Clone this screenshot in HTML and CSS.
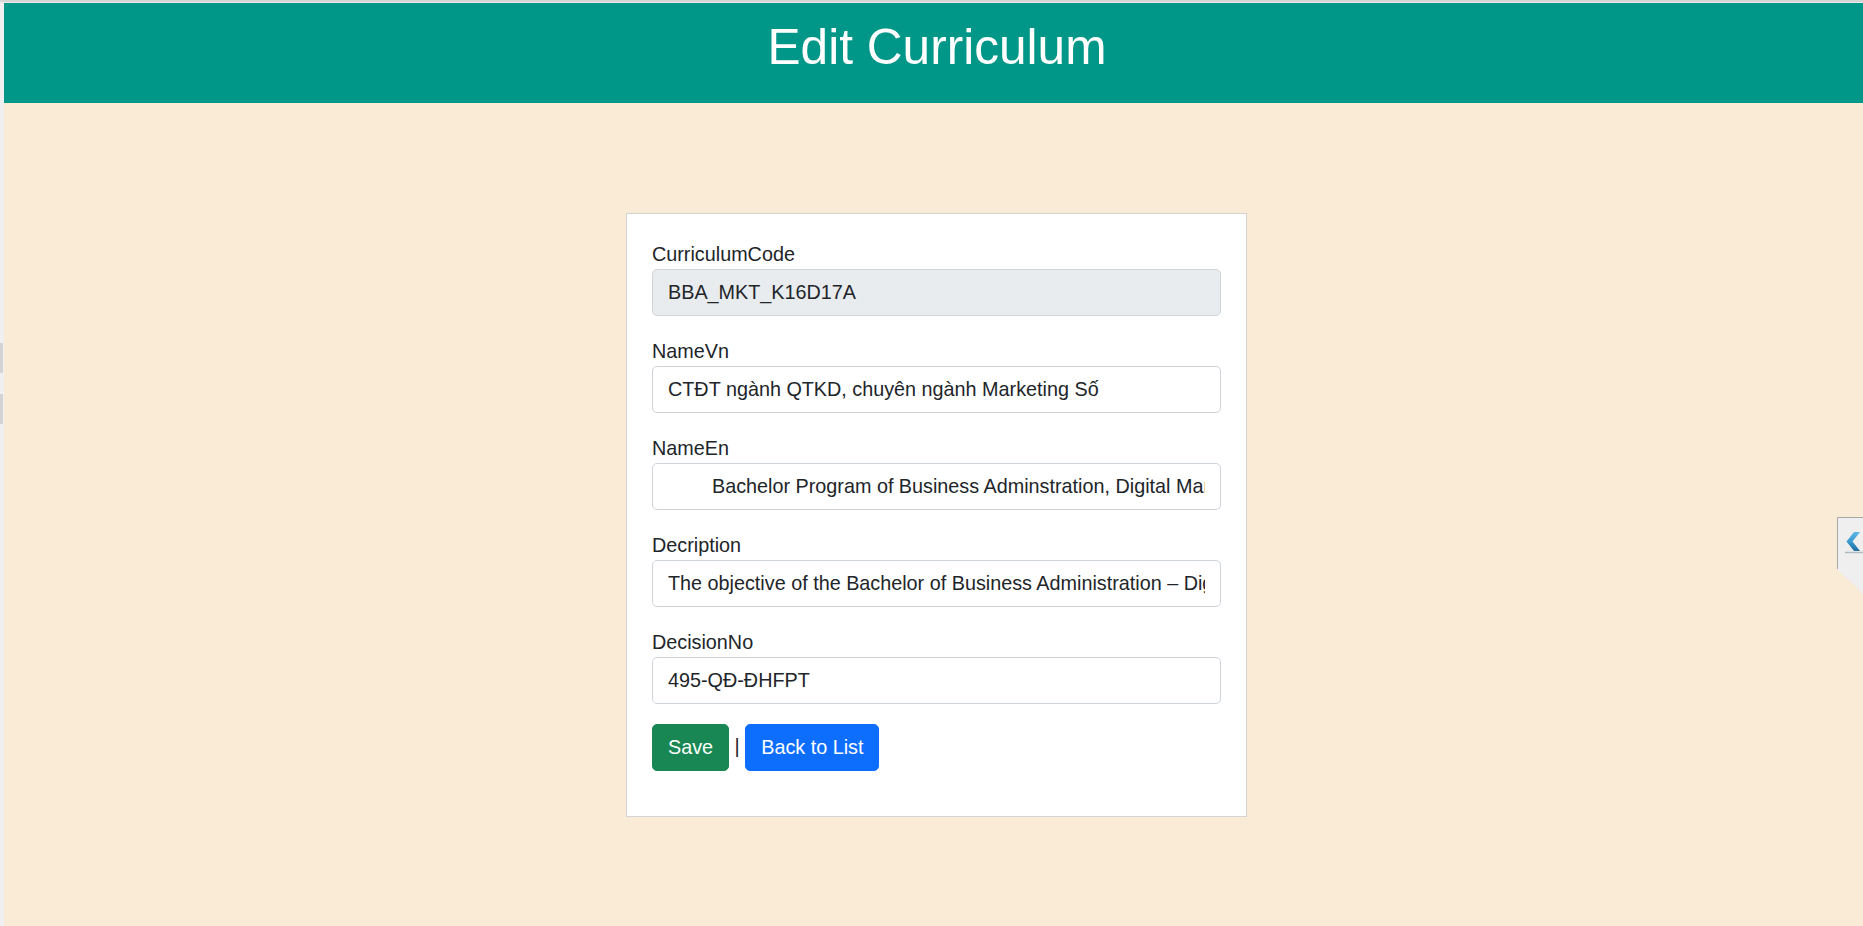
FILE: index.html
```html
<!DOCTYPE html>
<html lang="vi">
<head>
<meta charset="utf-8">
<title>Edit Curriculum</title>
<link rel="stylesheet" href="styles.css">
</head>
<body>
<div class="topline"></div>
<div class="frame">
  <div class="leftbar">
    <span class="tab tab-first"></span>
    <span class="tab tab-second"></span>
  </div>
  <div class="main">
    <header class="banner">
      <h1 class="banner-title">Edit Curriculum</h1>
    </header>
    <div class="content">
      <form class="card">
        <div class="form-group">
          <label class="form-label">CurriculumCode</label>
          <input class="form-control form-control-readonly" type="text" value="BBA_MKT_K16D17A" readonly>
        </div>
        <div class="form-group">
          <label class="form-label">NameVn</label>
          <input class="form-control" type="text" value="CTĐT ngành QTKD, chuyên ngành Marketing Số">
        </div>
        <div class="form-group">
          <label class="form-label">NameEn</label>
          <input class="form-control" type="text" value="        Bachelor Program of Business Adminstration, Digital Marketing">
        </div>
        <div class="form-group">
          <label class="form-label">Decription</label>
          <input class="form-control" type="text" value="The objective of the Bachelor of Business Administration – Digital Marketing program">
        </div>
        <div class="form-group">
          <label class="form-label">DecisionNo</label>
          <input class="form-control" type="text" value="495-QĐ-ĐHFPT">
        </div>
        <div class="form-actions">
          <button type="button" class="btn btn-success">Save</button> | <a class="btn btn-primary" href="#">Back to List</a>
        </div>
      </form>
    </div>
  </div>
</div>
<div class="side-toggle">
  <svg class="side-toggle-svg" width="26" height="78" viewBox="0 0 26 78">
    <defs>
      <linearGradient id="chev" x1="0" y1="0" x2="0" y2="1">
        <stop offset="0" stop-color="#5cb8e6"/>
        <stop offset="0.5" stop-color="#3a9bd0"/>
        <stop offset="1" stop-color="#1f6f9e"/>
      </linearGradient>
    </defs>
    <polygon points="0,0 26,0 26,77 0,52" fill="#efefef"/>
    <polyline points="0.5,52 0.5,0.5 26,0.5" fill="none" stroke="#a9a9a9" stroke-width="1"/>
    <line x1="8" y1="35.5" x2="26" y2="35.5" stroke="#7f949f" stroke-width="1.5" opacity="0.55"/>
    <polygon points="17,15 23,15 15.5,24.5 23,34 17,34 9.5,24.5" fill="url(#chev)"/>
  </svg>
</div>
</body>
</html>
```
FILE: styles.css
```css
* {
  box-sizing: border-box;
}

html, body {
  margin: 0;
  padding: 0;
  height: 100%;
}

body {
  font-family: "Liberation Sans", Arial, sans-serif;
  color: #212529;
  background: #f0f0f2;
  overflow: hidden;
}

.topline {
  height: 3px;
  background: #d6d6d6;
  border-bottom: 1px solid #e9e9e9;
}

.frame {
  display: flex;
  height: calc(100vh - 3px);
}

.leftbar {
  width: 4px;
  flex: 0 0 4px;
  display: flex;
  flex-direction: column;
  background: #f0f0f3;
}

.tab {
  display: block;
  width: 3px;
  height: 30px;
  background: #d3d3d5;
}

.tab-first {
  margin-top: 340px;
}

.tab-second {
  margin-top: 21px;
}

.main {
  flex: 1;
  display: flex;
  flex-direction: column;
  min-width: 0;
}

.banner {
  height: 100px;
  flex: 0 0 100px;
  background: #009688;
  padding: 14px 0 0 7px;
  text-align: center;
}

.banner-title {
  margin: 0;
  font-size: 49.6px;
  font-weight: normal;
  line-height: 60px;
  color: #ffffff;
}

.content {
  flex: 1;
  background: #faebd7;
  display: flex;
  align-items: center;
  justify-content: center;
  padding-left: 6px;
}

.card {
  width: 621px;
  background: #ffffff;
  border: 1px solid #d3d3d3;
  padding: 25px;
}

.form-group {
  margin-bottom: 20px;
}

.form-label {
  display: block;
  font-size: 19.8px;
  line-height: 30px;
  color: #212529;
}

.form-control {
  display: block;
  width: 100%;
  font-family: "Liberation Sans", Arial, sans-serif;
  font-size: 19.8px;
  line-height: 30px;
  padding: 7.5px 15px;
  color: #212529;
  background: #ffffff;
  border: 1px solid #ced4da;
  border-radius: 5px;
  outline: none;
  margin: 0;
}

.form-control-readonly {
  background: #e9ecef;
}

.form-actions {
  margin-bottom: 20px;
  font-size: 19.8px;
  line-height: 30px;
}

.btn {
  display: inline-block;
  font-family: "Liberation Sans", Arial, sans-serif;
  font-size: 19.8px;
  line-height: 30px;
  padding: 7.5px 15px;
  border: 1px solid transparent;
  border-radius: 5px;
  color: #ffffff;
  text-decoration: none;
  vertical-align: middle;
  cursor: pointer;
  margin: 0;
}

.btn-success {
  background: #198754;
  border-color: #198754;
}

.btn-primary {
  background: #0d6efd;
  border-color: #0d6efd;
}

.side-toggle {
  position: fixed;
  left: 1837px;
  top: 517px;
  width: 26px;
  height: 78px;
}

.side-toggle-svg {
  display: block;
}
```
